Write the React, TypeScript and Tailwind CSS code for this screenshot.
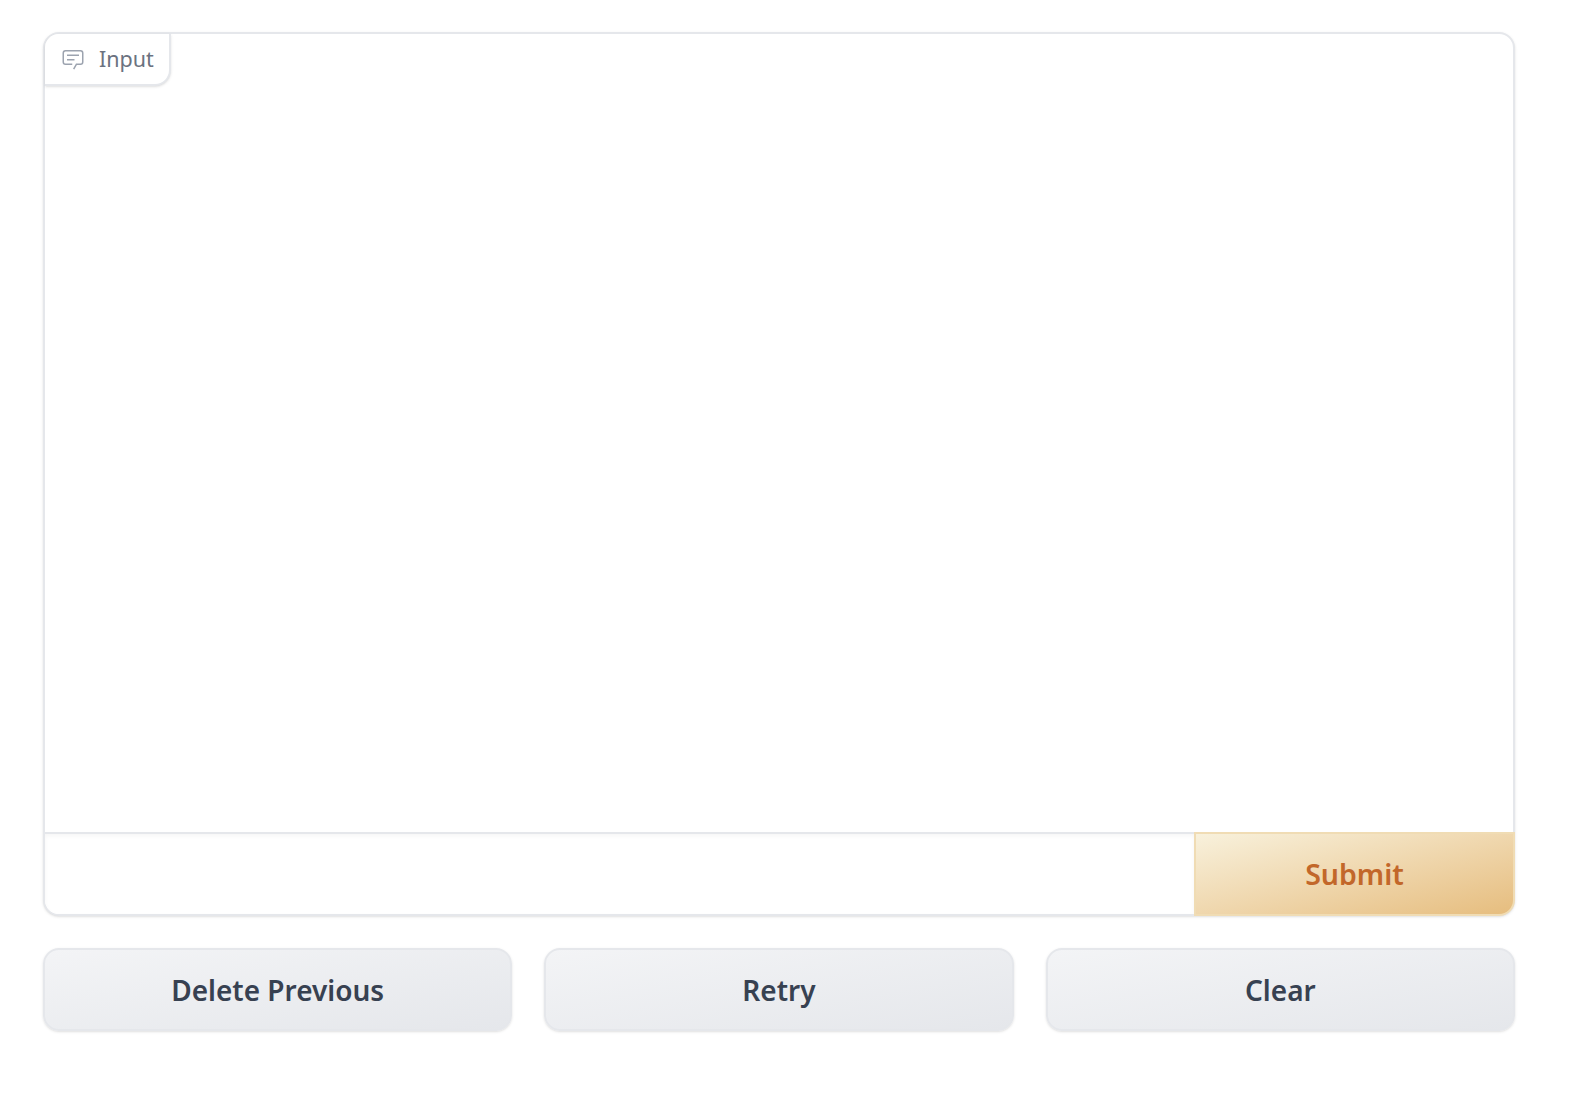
import React from 'react';

const ChatIcon: React.FC = () => (
    <svg viewBox="0 0 32 32" className="w-[24px] h-[24px] fill-[#9ca3af]">
        <path d="M17.74 30L16 29l4-7h6a2 2 0 0 0 2-2V8a2 2 0 0 0-2-2H6a2 2 0 0 0-2 2v12a2 2 0 0 0 2 2h9v2H6a4 4 0 0 1-4-4V8a4 4 0 0 1 4-4h20a4 4 0 0 1 4 4v12a4 4 0 0 1-4 4h-4.84z" />
        <path d="M8 10h16v2H8zm0 6h10v2H8z" />
    </svg>
);

const actions = ['Delete Previous', 'Retry', 'Clear'];

const App: React.FC = () => {
    return (
        <div className="w-[1572px] h-[1096px] bg-white pl-[43px] pr-[57px] pt-[32px] font-['Noto_Sans',sans-serif]">
            <div className="h-[884px] flex flex-col rounded-[16px] border-2 border-[#e5e7eb] shadow-sm bg-white">
                <div className="h-[798px] shrink-0">
                    <div className="w-[126px] h-[52px] flex items-center gap-[14px] pl-[16px] bg-white border-r-2 border-b-2 border-[#e5e7eb] rounded-tl-[14px] rounded-br-[16px] shadow-sm text-[#6b7280] text-[21.5px]">
                        <ChatIcon />
                        <span>Input</span>
                    </div>
                </div>
                <div className="flex-1 flex border-t-2 border-[#e5e7eb]">
                    <div className="flex-1 bg-white rounded-bl-[14px] shadow-[inset_0_2px_4px_rgba(0,0,0,0.04)]" />
                    <div className="w-[321px] -mt-[2px] -mr-[2px] -mb-[2px] flex items-center justify-center border-2 border-[#f0dcb4] rounded-br-[16px] bg-gradient-to-br from-[#f8f1dc] to-[#e6bd7e] text-[#c2672a] text-[28.5px] font-semibold">
                        Submit
                    </div>
                </div>
            </div>
            <div className="mt-[32px] grid grid-cols-3 gap-[32px]">
                {actions.map((label) => (
                    <div
                        key={label}
                        className="h-[83px] flex items-center justify-center rounded-[16px] border-2 border-[#e5e7eb] shadow-sm bg-gradient-to-br from-[#f3f4f6] to-[#e5e7eb] text-[#374151] text-[28px] font-semibold"
                    >
                        {label}
                    </div>
                ))}
            </div>
        </div>
    );
};

export default App;
